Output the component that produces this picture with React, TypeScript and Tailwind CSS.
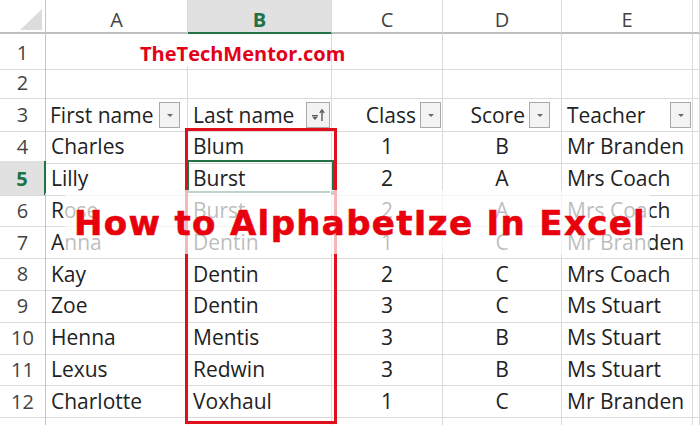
import React from "react";

// ─── Sheet data ───────────────────────────────────────────────────────────────

const rows = [
	["Charles", "Blum", "1", "B", "Mr Branden"],
	["Lilly", "Burst", "2", "A", "Mrs Coach"],
	["Rose", "Burst", "2", "A", "Mrs Coach"],
	["Anna", "Dentin", "1", "C", "Mr Branden"],
	["Kay", "Dentin", "2", "C", "Mrs Coach"],
	["Zoe", "Dentin", "3", "C", "Ms Stuart"],
	["Henna", "Mentis", "3", "B", "Ms Stuart"],
	["Lexus", "Redwin", "3", "B", "Ms Stuart"],
	["Charlotte", "Voxhaul", "1", "C", "Mr Branden"],
];

const grid =
	"grid grid-cols-[46px_142px_144px_111px_119px_131px_1fr] h-[31.8px]";
const cell = "border-r border-b border-[#dadada] flex items-center pt-[2px]";

function FilterBtn({ sorted = false }: { sorted?: boolean }) {
	return (
		<span
			className={`flex h-[26px] shrink-0 items-center justify-center border border-[#a9a9a9] bg-[#f3f3f3] ${sorted ? "w-[24px]" : "w-[21px]"}`}
		>
			{sorted ? (
				<svg width="18" height="16" viewBox="0 0 18 16">
					<path d="M3 9.5h6l-3 3.5z" fill="#5a5a5a" />
					<path d="M3 8.5h6" stroke="#5a5a5a" strokeWidth="1" />
					<path d="M13 14V3" stroke="#5a5a5a" strokeWidth="1.4" />
					<path d="M10.8 5.8L13 2.8l2.2 3" stroke="#5a5a5a" strokeWidth="1.3" fill="none" />
				</svg>
			) : (
				<svg width="12" height="10" viewBox="0 0 12 10">
					<path d="M3 4h6l-3 3z" fill="#6a6a6a" />
				</svg>
			)}
		</span>
	);
}

function RowHead({ n, active = false }: { n: number; active?: boolean }) {
	return (
		<div
			className={`flex items-center justify-center border-b border-[#dadada] pt-[2px] text-[20px] ${active ? "border-r-2 border-r-[#217346] bg-[#e1e1e1] font-bold text-[#217346]" : "border-r border-r-[#c6c6c6] text-[#444]"}`}
		>
			{n}
		</div>
	);
}

// ─── Page ─────────────────────────────────────────────────────────────────────

export default function App() {
	const letters = ["A", "B", "C", "D", "E", ""];

	return (
		<div className="relative h-[425px] w-[700px] overflow-hidden bg-white font-['Open_Sans',sans-serif] text-[21px] text-[#222]">
			{/* Column headers */}
			<div className="grid h-[34px] grid-cols-[46px_142px_144px_111px_119px_131px_1fr]">
				<div className="border-r border-b-2 border-r-[#c6c6c6] border-b-[#bfbfbf]">
					<svg width="46" height="32">
						<path d="M20 30L42 9V30Z" fill="#dcdcdc" />
					</svg>
				</div>
				{letters.map((l) => (
					<div
						key={l || "f"}
						className={`flex justify-center border-r border-b-2 border-r-[#dadada] pt-[10px] text-[20px] leading-[20px] ${l === "B" ? "border-b-[#217346] bg-[#e1e1e1] font-bold text-[#217346]" : "border-b-[#bfbfbf] text-[#444]"}`}
					>
						{l}
					</div>
				))}
			</div>

			{/* Row 1 */}
			<div className={grid}>
				<RowHead n={1} />
				<div className="col-span-2 flex items-start border-r border-b border-[#dadada] pt-[5px] pl-[94px]">
					<span className="whitespace-nowrap text-[20px] font-bold text-[#e2001a]">
						TheTechMentor.com
					</span>
				</div>
				<div className={cell} />
				<div className={cell} />
				<div className={cell} />
				<div className={cell} />
			</div>

			{/* Row 2 */}
			<div className={grid}>
				<RowHead n={2} />
				{[0, 1, 2, 3, 4, 5].map((i) => (
					<div key={i} className={cell} />
				))}
			</div>

			{/* Row 3: table headers */}
			<div className={grid}>
				<RowHead n={3} />
				<div className={`${cell} pl-[4px] pr-[7px]`}>
					<span className="flex-1">First name</span>
					<FilterBtn />
				</div>
				<div className={`${cell} pl-[5px] pr-[1px]`}>
					<span className="flex-1">Last name</span>
					<FilterBtn sorted />
				</div>
				<div className={`${cell} justify-end gap-[4px] pr-[1px]`}>
					<span>Class</span>
					<FilterBtn />
				</div>
				<div className={`${cell} justify-end gap-[4px] pr-[11px]`}>
					<span>Score</span>
					<FilterBtn />
				</div>
				<div className={`${cell} pl-[5px] pr-[1px]`}>
					<span className="flex-1">Teacher</span>
					<FilterBtn />
				</div>
				<div className={cell} />
			</div>

			{/* Data rows */}
			{rows.map((r, i) => (
				<div key={i} className={grid}>
					<RowHead n={i + 4} active={i === 1} />
					<div className={`${cell} pl-[5px]`}>{r[0]}</div>
					<div className={`${cell} pl-[5px]`}>{r[1]}</div>
					<div className={`${cell} justify-center`}>{r[2]}</div>
					<div className={`${cell} justify-center`}>{r[3]}</div>
					<div className={`${cell} pl-[5px]`}>{r[4]}</div>
					<div className={cell} />
				</div>
			))}

			{/* Row 13 */}
			<div className={grid}>
				<RowHead n={13} />
				{[0, 1, 2, 3, 4, 5].map((i) => (
					<div key={i} className={cell} />
				))}
			</div>

			{/* Selected cell B5 */}
			<div className="absolute top-[160px] left-[187px] h-[33px] w-[147px] border-2 border-[#217346]" />
			<div className="absolute top-[190px] left-[330px] h-[6px] w-[6px] border border-white bg-[#217346]" />

			{/* Red highlight around column B */}
			<div className="absolute top-[128px] left-[185px] h-[296px] w-[152px] border-[3px] border-[#e0101b]" />

			{/* Title band */}
			<div className="absolute top-[190px] left-[65px] flex h-[64px] w-[585px] items-start bg-white/70 pt-[16px] pl-[9px]">
				<span className="whitespace-nowrap font-['DejaVu_Sans',sans-serif] text-[34px] leading-[34px] font-bold tracking-[1.35px] text-[#e8000d] [-webkit-text-stroke:0.6px_#e8000d]">
					How to AlphabetIze In Excel
				</span>
			</div>
		</div>
	);
}
